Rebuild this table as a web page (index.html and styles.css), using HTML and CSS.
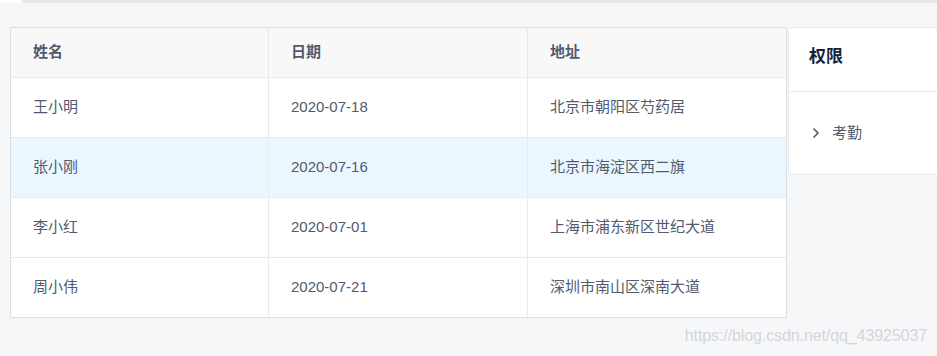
FILE: index.html
```html
<!DOCTYPE html>
<html lang="zh-CN">
<head>
<meta charset="utf-8">
<title>权限</title>
<link rel="stylesheet" href="styles.css">
</head>
<body>
<div class="topbar"><div class="topbar-left"></div><div class="topbar-right"></div></div>
<div class="content">
  <table class="data-table">
    <thead>
      <tr><th class="c1">姓名</th><th class="c2">日期</th><th class="c3">地址</th></tr>
    </thead>
    <tbody>
      <tr><td class="c1">王小明</td><td class="c2">2020-07-18</td><td class="c3">北京市朝阳区芍药居</td></tr>
      <tr class="highlight"><td class="c1">张小刚</td><td class="c2">2020-07-16</td><td class="c3">北京市海淀区西二旗</td></tr>
      <tr><td class="c1">李小红</td><td class="c2">2020-07-01</td><td class="c3">上海市浦东新区世纪大道</td></tr>
      <tr><td class="c1">周小伟</td><td class="c2">2020-07-21</td><td class="c3">深圳市南山区深南大道</td></tr>
    </tbody>
  </table>
  <div class="card">
    <div class="card-head">权限</div>
    <div class="card-body">
      <div class="menu-item">
        <svg class="chev" width="8" height="12" viewBox="0 0 8 12"><path d="M1.5 1.5 L6 6 L1.5 10.5" fill="none" stroke="#515a6e" stroke-width="1.6"/></svg>
        <span>考勤</span>
      </div>
    </div>
  </div>
</div>
<div class="watermark">https://blog.csdn.net/qq_43925037</div>
</body>
</html>
```
FILE: styles.css
```css
html, body {
  margin: 0;
  padding: 0;
}
body {
  background: #f5f7f9;
  font-family: "Liberation Sans", "Noto Sans CJK SC", sans-serif;
  font-size: 15px;
  color: #515a6e;
  width: 937px;
  height: 356px;
  overflow: hidden;
  position: relative;
}
.topbar {
  display: flex;
  height: 3px;
}
.topbar-left {
  width: 22px;
  background: #ffffff;
}
.topbar-right {
  flex: 1;
  background: #e8e8e9;
}
.content {
  display: flex;
  align-items: flex-start;
  gap: 1px;
  padding: 24px 0 0 10px;
}
.data-table {
  border-collapse: separate;
  border-spacing: 0;
  border: 1px solid #dcdee2;
  table-layout: fixed;
  width: 777px;
  flex: none;
  background: #fff;
}
.data-table th,
.data-table td {
  box-sizing: border-box;
  padding: 0 22px;
  line-height: 20px;
  text-align: left;
  border-right: 1px solid #e8eaec;
  border-bottom: 1px solid #e8eaec;
  white-space: nowrap;
}
.data-table .c1 { width: 258px; }
.data-table .c2 { width: 259px; }
.data-table .c3 { width: 258px; border-right: none; }
.data-table th {
  height: 50px;
  padding-bottom: 2px;
  background: #f8f8f9;
  font-weight: bold;
  color: #515a6e;
}
.data-table td {
  height: 60px;
  padding-bottom: 1px;
}
.data-table tbody tr:last-child td {
  height: 59px;
  border-bottom: none;
}
.data-table tr.highlight td {
  background: #ebf7ff;
}
.card {
  flex: 1 1 auto;
  min-width: 0;
  background: #fff;
  border: 1px solid #e8eaec;
  border-right: none;
  border-radius: 4px 0 0 4px;
  box-sizing: border-box;
}
.card-head {
  height: 64px;
  box-sizing: border-box;
  border-bottom: 1px solid #e8eaec;
  padding: 19px 20px 0;
  line-height: 20px;
  font-size: 17px;
  font-weight: bold;
  color: #17233d;
}
.card-body {
  height: 82px;
  display: flex;
  align-items: center;
  padding-left: 23px;
}
.menu-item {
  display: flex;
  align-items: center;
  gap: 12px;
  color: #515a6e;
  line-height: 20px;
}
.chev {
  display: block;
}
.watermark {
  position: absolute;
  right: 10px;
  top: 327px;
  font-family: "Liberation Sans", sans-serif;
  font-size: 16px;
  letter-spacing: -0.1px;
  line-height: 18px;
  color: #d4d6da;
}
```
